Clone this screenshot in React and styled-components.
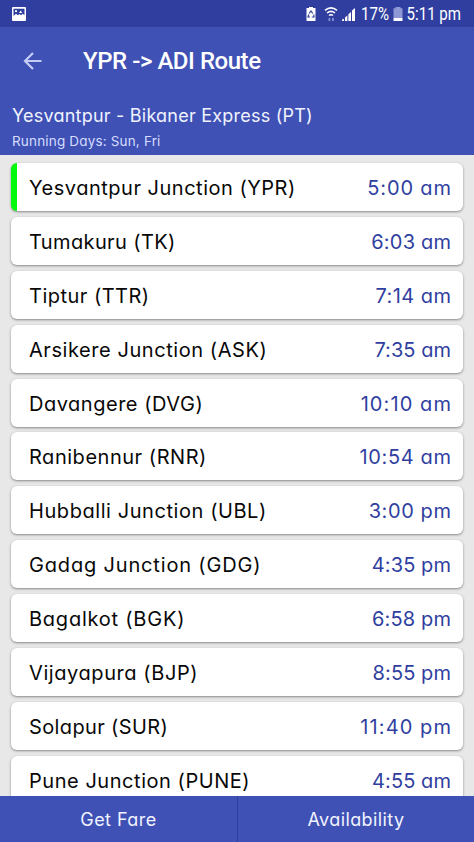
import React from "react";
import styled, { createGlobalStyle } from "styled-components";

const Global = createGlobalStyle`
  * { box-sizing: border-box; }
  body { margin: 0; background: #e8e8e8; }
`;

const Screen = styled.div`
  width: 474px;
  height: 842px;
  display: flex;
  flex-direction: column;
  overflow: hidden;
  background: #e8e8e8;
  font-family: Inter, "Open Sans", sans-serif;
  font-feature-settings: "cv11" 1, "calt" 0;
  white-space: nowrap;
`;

const StatusBar = styled.div`
  height: 27px;
  flex: none;
  display: flex;
  align-items: center;
  justify-content: space-between;
  padding: 0 13px 0 12px;
  background: #303f9f;
  color: #fff;
`;

const StatusGroup = styled.div`
  display: flex;
  align-items: center;
  svg { display: block; }
`;

const StatusText = styled.span`
  display: flex;
  justify-content: flex-end;
  width: ${(p) => p.$width}px;
  margin: 1px ${(p) => p.$after || 0}px 0 0;
  font: 400 17.5px/27px Roboto, sans-serif;
  transform: scaleX(0.86);
  transform-origin: right;
`;

const AppBar = styled.header`
  height: 67px;
  flex: none;
  display: flex;
  align-items: center;
  padding-left: 23px;
  background: #3f51b5;
`;

const BackIcon = styled.svg`
  display: block;
  margin-right: 41px;
`;

const Title = styled.h1`
  margin: 1px 0 0;
  color: #fff;
  font: 500 24px/32px Roboto, sans-serif;
  letter-spacing: ${(p) => p.$tracking}px;
`;

const TrainInfo = styled.section`
  height: 61px;
  flex: none;
  padding: 10px 12px 0;
  background: #3f51b5;
  color: #f0f3ff;
`;

const TrainName = styled.div`
  font-size: 18px;
  line-height: 24px;
  letter-spacing: ${(p) => p.$tracking}px;
`;

const RunningDays = styled.div`
  margin-top: 3px;
  color: #d5dcff;
  font-size: 13.5px;
  line-height: 20px;
  letter-spacing: ${(p) => p.$tracking}px;
`;

const StationList = styled.main`
  flex: 1;
  min-height: 0;
  display: flex;
  flex-direction: column;
  gap: 5.9px;
  overflow: hidden;
  padding: 8px 11px 0;
`;

const StationCard = styled.div`
  height: 48px;
  flex: none;
  display: flex;
  align-items: center;
  justify-content: space-between;
  overflow: hidden;
  padding: 2px 12px 0 ${(p) => (p.$active ? 12 : 18)}px;
  border-left: ${(p) => (p.$active ? "6px solid #00fa0c" : "0")};
  border-radius: 6px;
  background: #fff;
  box-shadow: 0 1px 2.5px rgba(0, 0, 0, 0.42);
`;

const StationName = styled.span`
  color: #080808;
  font-size: 20px;
  line-height: 28px;
  letter-spacing: ${(p) => p.$tracking}px;
`;

const Time = styled.span`
  margin-right: ${(p) => -p.$tracking}px;
  color: #303f9f;
  font-size: 20px;
  line-height: 28px;
  letter-spacing: ${(p) => p.$tracking}px;
`;

const BottomBar = styled.footer`
  height: 46px;
  flex: none;
  display: grid;
  grid-template-columns: 238px 1fr;
  background: #3f51b5;
`;

const Action = styled.button`
  border: 0;
  border-right: ${(p) => (p.$divided ? "1px solid #303f9f" : "0")};
  padding: 1px 0 0;
  background: transparent;
  color: #f0f3ff;
  font: 400 18px/24px Inter, sans-serif;
  font-feature-settings: "cv11" 1;
  letter-spacing: ${(p) => p.$tracking}px;
`;

const stations = [
  { name: "Yesvantpur Junction (YPR)", time: "5:00 am", nt: 0.51, tt: 0.85 },
  { name: "Tumakuru (TK)", time: "6:03 am", nt: 0.38, tt: 0.2 },
  { name: "Tiptur (TTR)", time: "7:14 am", nt: 0.48, tt: 0.45 },
  { name: "Arsikere Junction (ASK)", time: "7:35 am", nt: 0.56, tt: 0.05 },
  { name: "Davangere (DVG)", time: "10:10 am", nt: 0.52, tt: 1.1 },
  { name: "Ranibennur (RNR)", time: "10:54 am", nt: 0.53, tt: 0.65 },
  { name: "Hubballi Junction (UBL)", time: "3:00 pm", nt: 0.57, tt: 0.6 },
  { name: "Gadag Junction (GDG)", time: "4:35 pm", nt: 0.83, tt: 0.1 },
  { name: "Bagalkot (BGK)", time: "6:58 pm", nt: 0.77, tt: 0.15 },
  { name: "Vijayapura (BJP)", time: "8:55 pm", nt: 0.58, tt: 0.1 },
  { name: "Solapur (SUR)", time: "11:40 pm", nt: 0.37, tt: 1.1 },
  { name: "Pune Junction (PUNE)", time: "4:55 am", nt: 0.54, tt: 0.1 },
];

const PictureIcon = () => (
  <svg width="14" height="14" viewBox="0 0 14 14">
    <rect width="14" height="14" rx="1" fill="#fff" />
    <path d="M1.5 1.8h11v6.4l-1.8-1.4-1.6 1.4L7.5 7 5.8 8.2 4 6.8 1.5 9z" fill="#303f9f" />
    <circle cx="4" cy="4.2" r="1.1" fill="#fff" />
    <path d="M7 6l1.7-2.5L10.2 6z" fill="#fff" />
  </svg>
);

const StatusIcons = () => (
  <svg width="51" height="16" viewBox="0 0 51 16" fill="none">
    <path d="M3 1h4v1h2.5v13h-9V2H3z" fill="#fff" />
    <path d="M3.2 7.5L5 5l1.8 2.5M7.8 8.5L8 11H5.8M4 11H2l.8-2.5" stroke="#303f9f" strokeWidth="1.2" />
    <path d="M19 4.4q6-5 12 0M21 7q4-3.2 8 0M23 9.5q2-1.6 4 0" stroke="#fff" strokeWidth="1.6" />
    <path d="M23.4 12v3M27 12v3" stroke="#8490d2" strokeWidth="1.8" />
    <path d="M36 15v-1.2l2-1V15zM39 15v-3.6l2.4-1.9V15zM42.4 15V8.2L45 6v9zM46 15V4.4L49 2v13z" fill="#fff" />
  </svg>
);

const BatteryIcon = () => (
  <svg width="10" height="14" viewBox="0 0 10 14">
    <path d="M2.5 0h5v1.3H9.5V11h-9V1.3h2z" fill="#8d98d4" />
    <path d="M.5 11h9v3h-9z" fill="#fff" />
  </svg>
);

export default function App() {
  return (
    <>
      <Global />
      <Screen>
        <StatusBar>
          <PictureIcon />
          <StatusGroup>
            <StatusIcons />
            <StatusText $width={32} $after={4}>17%</StatusText>
            <BatteryIcon />
            <StatusText $width={58}>5:11 pm</StatusText>
          </StatusGroup>
        </StatusBar>
        <AppBar>
          <BackIcon width="19" height="18" viewBox="0 0 19 18" fill="none" stroke="#c5cdf7" strokeWidth="2.2">
            <path d="M18.5 9H2M10 1L2 9l8 8" />
          </BackIcon>
          <Title $tracking={-0.46}>YPR -&gt; ADI Route</Title>
        </AppBar>
        <TrainInfo>
          <TrainName $tracking={0.22}>Yesvantpur - Bikaner Express (PT)</TrainName>
          <RunningDays $tracking={0.17}>Running Days: Sun, Fri</RunningDays>
        </TrainInfo>
        <StationList>
          {stations.map((s, i) => (
            <StationCard key={s.name} $active={i === 0}>
              <StationName $tracking={s.nt}>{s.name}</StationName>
              <Time $tracking={s.tt}>{s.time}</Time>
            </StationCard>
          ))}
        </StationList>
        <BottomBar>
          <Action $divided $tracking={0.45}>Get Fare</Action>
          <Action $tracking={0.4}>Availability</Action>
        </BottomBar>
      </Screen>
    </>
  );
}
